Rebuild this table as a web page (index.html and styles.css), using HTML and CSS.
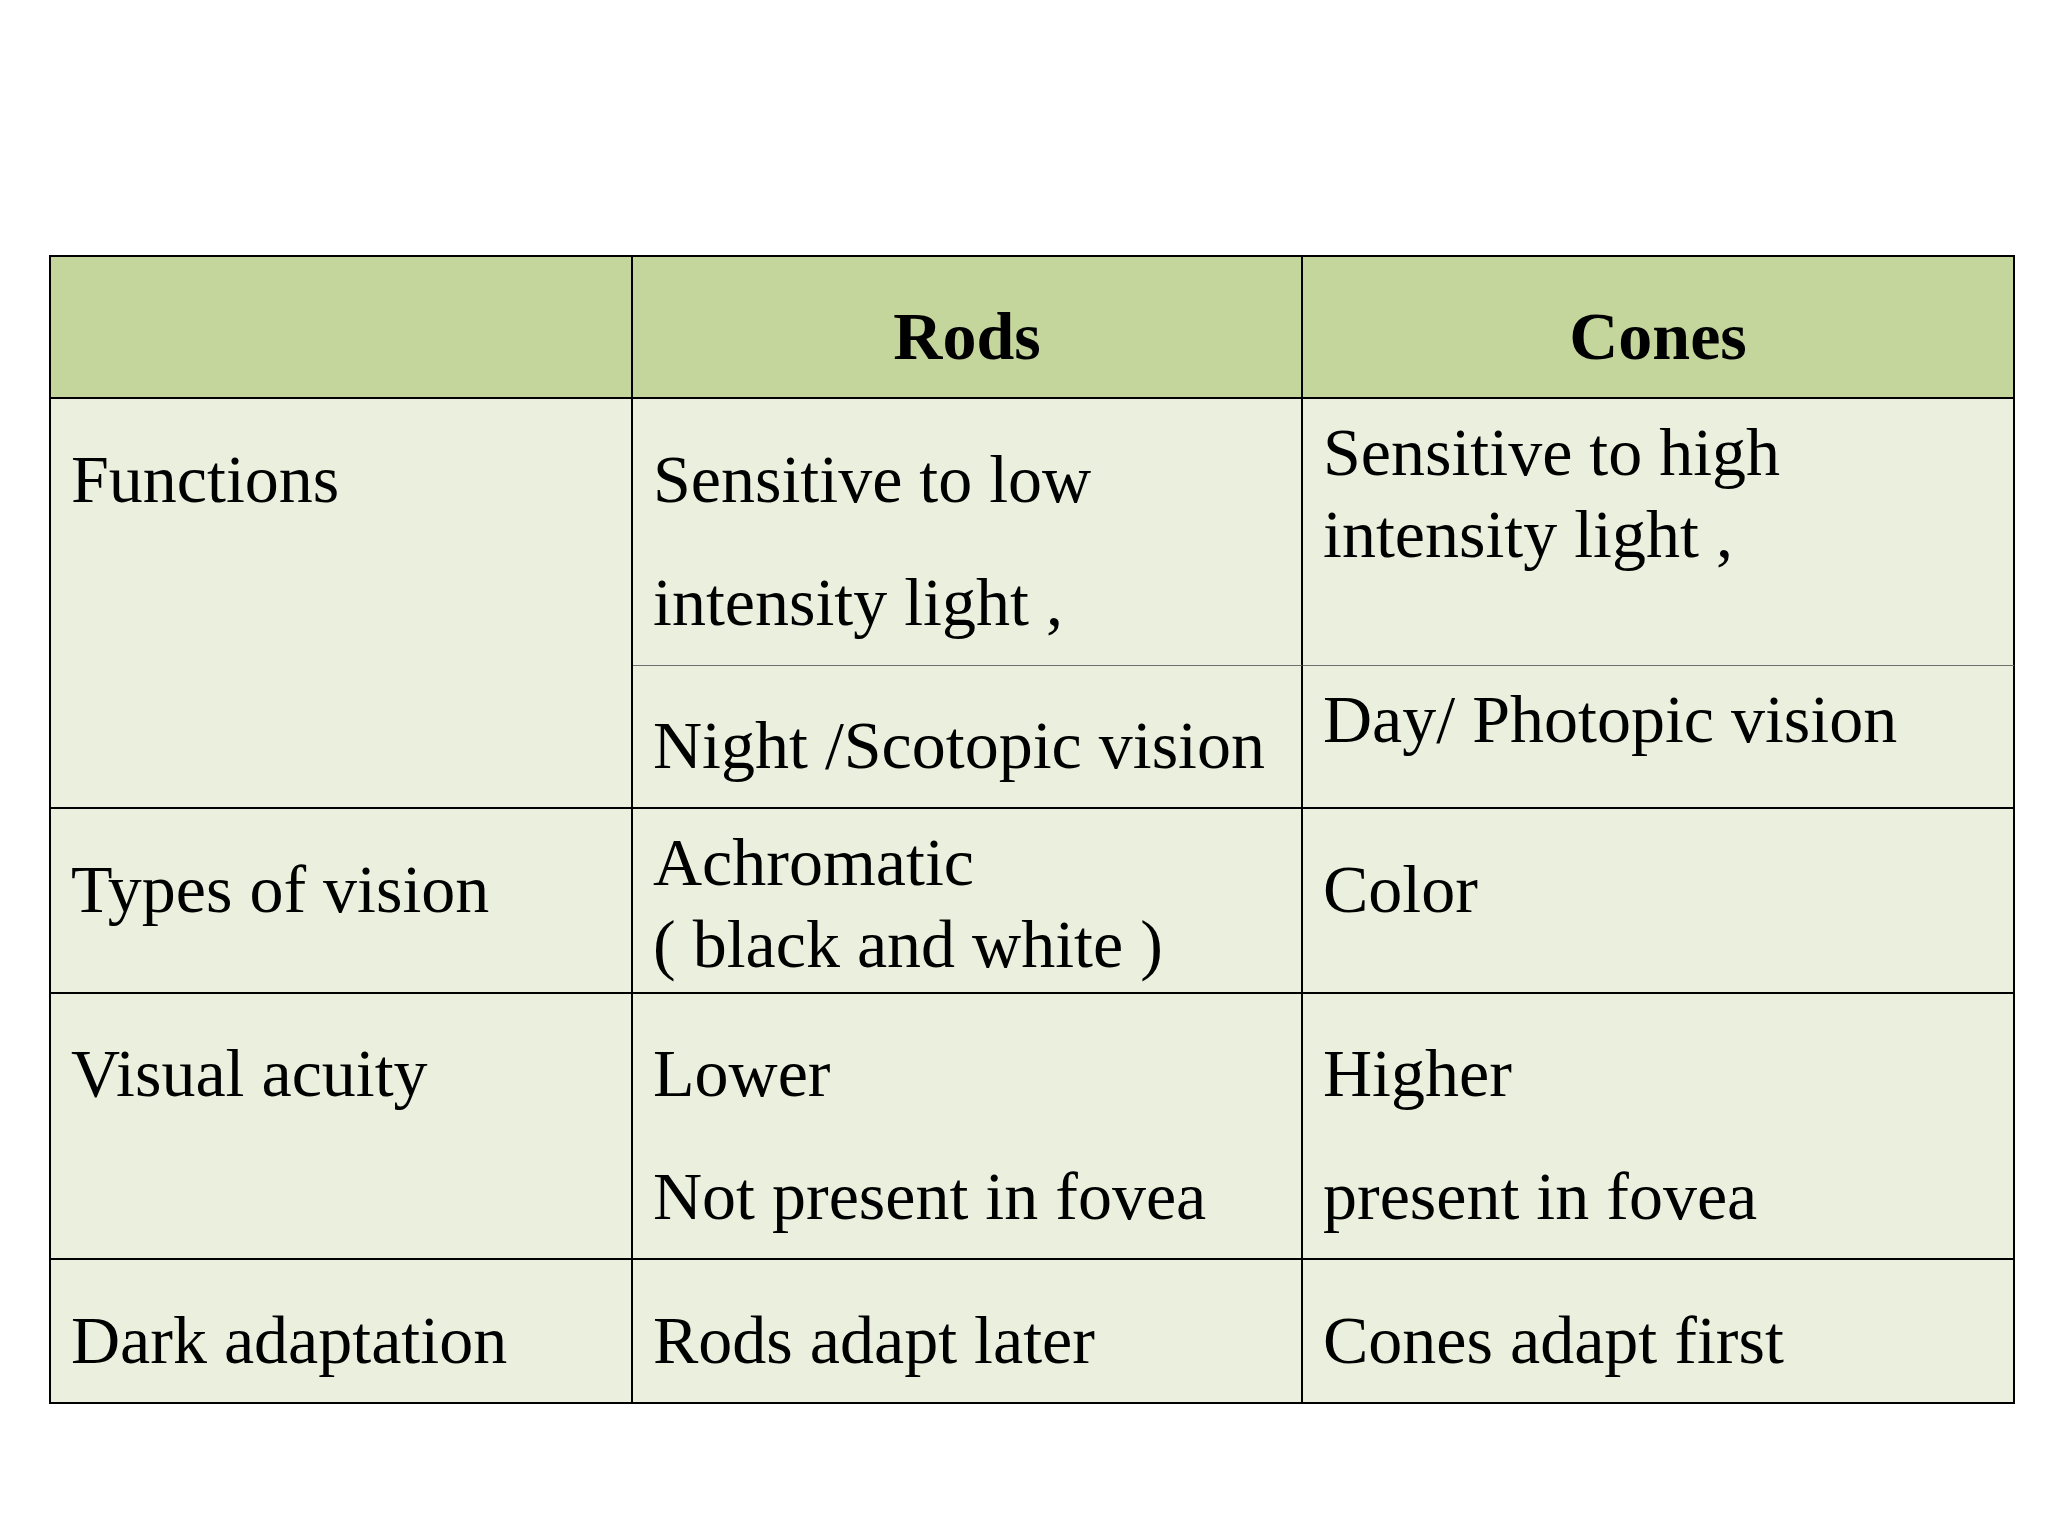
FILE: index.html
```html
<!DOCTYPE html>
<html lang="en">
<head>
<meta charset="utf-8">
<title>Rods vs Cones</title>
<link rel="stylesheet" href="styles.css">
</head>
<body>
<main class="slide">
  <div class="table">
    <div class="cell head c1"></div>
    <div class="cell head c2 pad-h">Rods</div>
    <div class="cell head c3 pad-h">Cones</div>

    <div class="cell c1 span2 pad-39">Functions</div>
    <div class="cell c2 split pad-39">
      <div>Sensitive to low</div>
      <div class="gap-line">intensity light ,</div>
    </div>
    <div class="cell c3 split pad-12">
      <div>Sensitive to high</div>
      <div>intensity light ,</div>
    </div>
    <div class="cell c2 pad-38">Night /Scotopic vision</div>
    <div class="cell c3 pad-12">Day/ Photopic vision</div>

    <div class="cell c1 pad-39">Types of vision</div>
    <div class="cell c2 pad-12">
      <div>Achromatic</div>
      <div>( black and white )</div>
    </div>
    <div class="cell c3 pad-39">Color</div>

    <div class="cell c1 pad-38">Visual acuity</div>
    <div class="cell c2 pad-38">
      <div>Lower</div>
      <div class="gap-line">Not present in fovea</div>
    </div>
    <div class="cell c3 pad-38">
      <div>Higher</div>
      <div class="gap-line">present in fovea</div>
    </div>

    <div class="cell c1 pad-39">Dark adaptation</div>
    <div class="cell c2 pad-39">Rods adapt later</div>
    <div class="cell c3 pad-39">Cones adapt first</div>
  </div>
</main>
</body>
</html>
```
FILE: styles.css
```css
html, body {
  margin: 0;
  padding: 0;
  background: #ffffff;
}

.slide {
  width: 2048px;
  height: 1536px;
  padding: 255px 0 0 49px;
  box-sizing: border-box;
}

.table {
  display: grid;
  grid-template-columns: 582px 670px 712px;
  grid-template-rows: 142px 267px 143px 185px 266px 144px;
  width: 1966px;
  box-sizing: border-box;
  border-left: 2px solid #000;
  border-top: 2px solid #000;
  font-family: "Liberation Serif", "Times New Roman", serif;
  font-size: 68px;
  line-height: 81.6px;
  color: #000;
}

.cell {
  box-sizing: border-box;
  border-right: 2px solid #000;
  border-bottom: 2px solid #000;
  background: #ebf0de;
  padding-left: 20px;
  padding-right: 10px;
  white-space: nowrap;
}

.head {
  background: #c4d69c;
  font-weight: bold;
  text-align: center;
  padding-left: 0;
  padding-right: 0;
}

.span2 {
  grid-row: span 2;
}

.split {
  border-bottom: 1px solid #6f6f6f;
}

.gap-line {
  margin-top: 41.5px;
}

.pad-h { padding-top: 39px; }
.pad-39 { padding-top: 40px; }
.pad-38 { padding-top: 39px; }
.pad-12 { padding-top: 13px; }
```
